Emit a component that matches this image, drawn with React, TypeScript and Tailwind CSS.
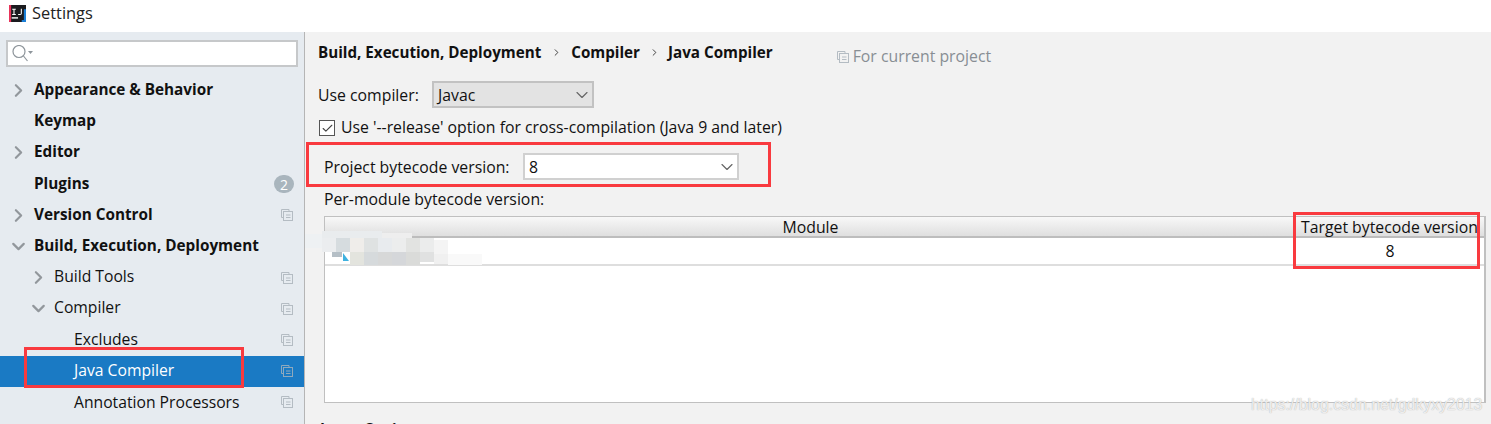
import { ChevronDown, ChevronRight, Check } from "lucide-react"

interface NavItem {
  label: string
  indent: 0 | 1 | 2
  bold?: boolean
  arrow?: "right" | "down"
  copy?: boolean
  badge?: string
  selected?: boolean
}

const navItems: NavItem[] = [
  { label: "Appearance & Behavior", indent: 0, bold: true, arrow: "right" },
  { label: "Keymap", indent: 0, bold: true },
  { label: "Editor", indent: 0, bold: true, arrow: "right" },
  { label: "Plugins", indent: 0, bold: true, badge: "2" },
  { label: "Version Control", indent: 0, bold: true, arrow: "right", copy: true },
  { label: "Build, Execution, Deployment", indent: 0, bold: true, arrow: "down" },
  { label: "Build Tools", indent: 1, arrow: "right", copy: true },
  { label: "Compiler", indent: 1, arrow: "down", copy: true },
  { label: "Excludes", indent: 2, copy: true },
  { label: "Java Compiler", indent: 2, copy: true, selected: true },
  { label: "Annotation Processors", indent: 2, copy: true },
]

const mosaic = [
  { x: 0, y: 6, w: 17, h: 14, c: "#eef1f3" },
  { x: 17, y: 3, w: 60, h: 7, c: "#e9ecee" },
  { x: 77, y: 5, w: 30, h: 5, c: "#eeeeee" },
  { x: 17, y: 10, w: 14, h: 14, c: "#ebedef" },
  { x: 31, y: 10, w: 14, h: 14, c: "#d6dcdf" },
  { x: 45, y: 10, w: 14, h: 14, c: "#efedea" },
  { x: 59, y: 10, w: 14, h: 14, c: "#dfe2e2" },
  { x: 73, y: 10, w: 14, h: 14, c: "#e8ebee" },
  { x: 87, y: 10, w: 14, h: 14, c: "#eceded" },
  { x: 101, y: 10, w: 14, h: 14, c: "#e2e3e1" },
  { x: 115, y: 10, w: 14, h: 14, c: "#ebecec" },
  { x: 129, y: 12, w: 14, h: 14, c: "#f4f4f4" },
  { x: 45, y: 24, w: 14, h: 13, c: "#e3e4de" },
  { x: 59, y: 24, w: 14, h: 13, c: "#d6dadc" },
  { x: 73, y: 24, w: 14, h: 13, c: "#d7d8d8" },
  { x: 87, y: 24, w: 14, h: 13, c: "#d5d7da" },
  { x: 101, y: 24, w: 14, h: 13, c: "#dadbd9" },
  { x: 115, y: 24, w: 14, h: 10, c: "#e0e1e1" },
  { x: 129, y: 26, w: 14, h: 10, c: "#f0f0f0" },
  { x: 143, y: 26, w: 34, h: 11, c: "#f9f9f9" },
]

function CopyIcon({ dark }: { dark?: boolean }) {
  const stroke = dark ? "#8fa9bd" : "#b4bcc3"
  return (
    <svg width="12" height="12" viewBox="0 0 12 12" fill="none" stroke={stroke} strokeWidth="1">
      <path d="M8 2.5V.5H.5V8.5H2.5" />
      <rect x="2.5" y="2.5" width="9" height="9" />
      <path d="M5 6h4.500M5 8.500h4.500" />
    </svg>
  )
}

function IdeaLogo() {
  return (
    <svg width="17" height="17" viewBox="0 0 16 16" className="shrink-0">
      <rect width="16" height="16" fill="#1b1b1f" />
      <path d="M0 0h2v16H0z" fill="#e8345a" />
      <path d="M14 4h2v12h-4v-2h2z" fill="#1b7fd6" />
      <rect x="2.500" y="11.500" width="6" height="1.300" fill="#fff" />
      <path d="M3 3.500h3.400v1H5.200v4h1.200v1H3v-1h1.200v-4H3zM8.500 3.500h3.600v4.600q0 1.400-1.600 1.400H8.600v-1h1.600q.9 0 .9-.6v-4.400H8.500z" fill="#fff" />
    </svg>
  )
}

function SidebarRow({ item }: { item: NavItem }) {
  return (
    <div className={`flex h-[31.2px] items-center pr-[11px] ${item.selected ? "bg-[#1a7ac4] text-white" : "text-[#111]"}`}>
      <div className={`flex items-center ${item.indent === 0 ? "pl-[11px]" : item.indent === 1 ? "pl-[31px]" : "pl-[74px]"}`}>
        {item.indent < 2 && (
          <span className="mr-[9px] flex w-[14px] justify-center text-[#92979c]">
            {item.arrow === "right" && <ChevronRight size={21} strokeWidth={2.5} className="shrink-0" />}
            {item.arrow === "down" && <ChevronDown size={21} strokeWidth={2.5} className="shrink-0" />}
          </span>
        )}
        <span className={`leading-none ${item.indent === 2 ? "" : "pb-[2px]"} ${item.bold ? "text-[15.3px] font-bold" : "text-[15.7px]"}`}>{item.label}</span>
      </div>
      <div className="ml-auto flex items-center">
        {item.copy && <CopyIcon dark={item.selected} />}
        {item.badge && (
          <span className="mr-[-1px] flex h-[18px] w-[20px] items-center justify-center rounded-full bg-[#a9b5bd] text-[14px] text-white">
            {item.badge}
          </span>
        )}
      </div>
    </div>
  )
}

export default function App() {
  return (
    <div className="relative h-[424px] w-[1491px] overflow-hidden bg-white font-['Open_Sans','Noto_Sans',sans-serif] text-[15.8px] text-[#111]">
      <div className="flex h-[32px] items-center gap-[6px] pb-[5px] pl-[9px] text-[#222]">
        <IdeaLogo />
        <span className="text-[16.400px] leading-none">Settings</span>
      </div>

      <div className="flex h-[392px]">
        <aside className="w-[305px] shrink-0 border-r border-[#b5b5b5] bg-[#e6ebf0]">
          <div className="px-[6px] py-[8px]">
            <div className="flex h-[27px] items-center border-2 border-[#c6c8ca] bg-white pl-[4px] pr-[2px]">
              <svg width="22" height="17" viewBox="0 0 22 17" fill="none" stroke="#8e959b" strokeWidth="1.2">
                <circle cx="7" cy="6.500" r="6" />
                <path d="M11.500 11L15.500 16" />
                <path d="M16 6h5l-2.500 3z" fill="#8e959b" stroke="none" />
              </svg>
            </div>
          </div>
          {navItems.map((item) => (
            <SidebarRow key={item.label} item={item} />
          ))}
        </aside>

        <main className="flex-1 bg-[#f2f2f2] pl-[13px] pr-[5px] pt-[8px]">
          <div className="flex h-[24px] items-center">
            <span className="text-[15.2px] font-bold">Build, Execution, Deployment</span>
            <ChevronRight size={11} strokeWidth={2} className="mx-[9.5px] text-[#333]" />
            <span className="text-[15.2px] font-bold">Compiler</span>
            <ChevronRight size={11} strokeWidth={2} className="mx-[8.5px] text-[#333]" />
            <span className="text-[15.2px] font-bold">Java Compiler</span>
            <span className="ml-[64px] mt-[9px] flex items-center gap-[4px] text-[#888e94]">
              <CopyIcon />
              For current project
            </span>
          </div>

          <div className="mt-[17px] flex h-[27px] items-center">
            <span className="w-[114px] pt-[2px]">Use compiler:</span>
            <div className="flex h-[27px] w-[162px] items-center justify-between border-2 border-[#c2c2c2] bg-[#e3e3e3] pl-[4px]">
              <span className="pt-[2px]">Javac</span>
              <ChevronDown size={20} strokeWidth={1.4} className="text-[#666]" />
            </div>
          </div>

          <div className="mt-[12px] flex h-[16px] items-center gap-[6px] pl-[1px]">
            <span className="flex h-[16px] w-[16px] items-center justify-center border border-[#555] bg-white">
              <Check size={13} strokeWidth={2} className="text-[#444]" />
            </span>
            <span>Use '--release' option for cross-compilation (Java 9 and later)</span>
          </div>

          <div className="mt-[17px] flex h-[27px] items-center pl-[6px]">
            <span className="w-[199px] pt-[2px]">Project bytecode version:</span>
            <div className="flex h-[27px] w-[216px] items-center justify-between border-2 border-[#d0d0d0] bg-white pl-[4px]">
              <span className="pt-[2px]">8</span>
              <ChevronDown size={20} strokeWidth={1.4} className="text-[#666]" />
            </div>
          </div>

          <div className="mt-[9px] h-[27px] pl-[6px] leading-[20px]">Per-module bytecode version:</div>

          <div className="ml-[6px] h-[187px] border-y border-r-2 border-l border-[#c0c0c0] bg-white">
            <div className="flex h-[21px] border-b-2 border-[#bdbdbd] bg-linear-to-b from-[#f8f8f8] to-[#dfdfdf]">
              <div className="flex-1 pr-[2px] text-center leading-[20px]">Module</div>
              <div className="w-[186px] whitespace-nowrap pl-[3px] leading-[20px]">Target bytecode version</div>
            </div>
            <div className="flex h-[28px] border-b-2 border-[#dedede]">
              <div className="flex-1" />
              <div className="w-[186px] pr-[2px] text-center leading-[26px]">8</div>
            </div>
          </div>

          <div className="mt-[19px] pl-[2px] text-[15.2px] font-bold leading-none">Javac Options</div>
        </main>
      </div>

      {/* blurred module name */}
      <svg width="180" height="46" viewBox="0 0 180 46" className="absolute left-[305px] top-[228px]">
        {mosaic.map((m) => (
          <rect key={`${m.x}-${m.y}`} x={m.x} y={m.y} width={m.w} height={m.h} fill={m.c} />
        ))}
        <rect x="27" y="24" width="10" height="5" fill="#b5bfc6" />
        <path d="M38 25l6 8h-6z" fill="#3fb2e0" />
      </svg>

      {/* red annotations */}
      <div className="absolute left-[24px] top-[347px] h-[41px] w-[220px] border-[3px] border-[#f93a3f]" />
      <div className="absolute left-[306px] top-[142px] h-[45px] w-[465px] border-[3px] border-[#f93a3f]" />
      <div className="absolute left-[1293px] top-[212px] h-[57px] w-[187px] border-[3px] border-[#f93a3f]" />

      <span className="absolute left-[1251px] top-[393px] font-['Liberation_Sans',sans-serif] text-[15.900px] text-white/80 [text-shadow:0_0_1px_#999]">
        https://blog.csdn.net/gdkyxy2013
      </span>
    </div>
  )
}
